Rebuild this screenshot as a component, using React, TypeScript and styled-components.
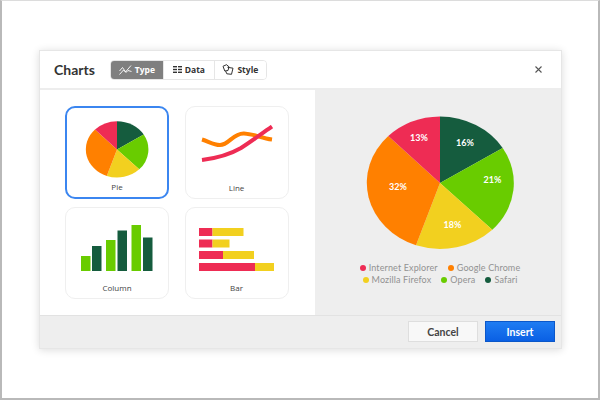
import styled, { createGlobalStyle } from "styled-components";
import React from "react";

const Global = createGlobalStyle`
  html, body {
    margin: 0;
    padding: 0;
    background: #fff;
  }
  * {
    box-sizing: border-box;
  }
`;

const Page = styled.div`
  width: 600px;
  height: 400px;
  padding: 49px 36px 49px 37px;
  border-style: solid;
  border-color: #b9b9b9;
  border-width: 1px 2px 2px 2px;
  border-top-color: #dcdcdc;
  font-family: "Open Sans", sans-serif;
`;

const Dialog = styled.div`
  width: 523px;
  height: 299px;
  background: #fff;
  display: flex;
  flex-direction: column;
  border: 1px solid #e6e6e6;
  box-shadow: 0 1px 8px rgba(0, 0, 0, 0.14);
`;

const Header = styled.div`
  height: 39px;
  flex: none;
  display: flex;
  align-items: center;
  padding: 0 19px 0 14px;
  border-bottom: 2px solid #ededed;
`;

const Title = styled.h1`
  margin: 0 15px 0 0;
  font-family: "Lato", sans-serif;
  font-size: 14px;
  font-weight: 700;
  color: #333;
`;

const Tabs = styled.div`
  display: flex;
  height: 20px;
  border: 1px solid #e6e6e6;
  border-radius: 4px;
  overflow: hidden;
`;

const Tab = styled.div<{ $active?: boolean; $width: number }>`
  width: ${({ $width }) => $width}px;
  display: flex;
  align-items: center;
  justify-content: center;
  gap: 3px;
  font-size: 8.5px;
  font-weight: 700;
  background: ${({ $active }) => ($active ? "#7f7f7f" : "#fff")};
  color: ${({ $active }) => ($active ? "#fff" : "#333")};
  & + & {
    border-left: 1px solid #e6e6e6;
  }
`;

const Close = styled.div`
  margin-left: auto;
  color: #444;
  display: flex;
`;

const Body = styled.div`
  flex: 1;
  display: flex;
  min-height: 0;
`;

const Gallery = styled.div`
  width: 275px;
  flex: none;
  padding: 16px 0 0 25px;
  display: grid;
  grid-template-columns: 104px 104px;
  grid-template-rows: 92.5px 92px;
  column-gap: 15.5px;
  row-gap: 8.5px;
  align-content: start;
`;

const Card = styled.div<{ $selected?: boolean }>`
  border-radius: 10px;
  border: ${({ $selected }) =>
    $selected ? "2px solid #3b86f0" : "1.5px solid #efefef"};
  display: flex;
  flex-direction: column;
  align-items: center;
  justify-content: flex-end;
  padding-bottom: 5px;
  background: #fff;
`;

const Thumb = styled.svg`
  display: block;
  flex: none;
`;

const CardLabel = styled.div<{ $gap: number }>`
  font-size: 8px;
  line-height: 11px;
  color: #444;
  margin-top: ${({ $gap }) => $gap}px;
`;

const Preview = styled.div`
  flex: 1;
  background: #eeeeee;
  display: flex;
  flex-direction: column;
  align-items: center;
  padding: 26px 0 0 4px;
`;

const Legend = styled.div`
  margin-top: 13px;
  display: flex;
  flex-direction: column;
  align-items: center;
  gap: 2px;
`;

const LegendRow = styled.div`
  display: flex;
  gap: 10px;
`;

const LegendItem = styled.div`
  display: flex;
  align-items: center;
  gap: 3px;
  font-family: "Lato", sans-serif;
  font-size: 9px;
  letter-spacing: 0.12px;
  line-height: 10px;
  color: #929292;
`;

const Dot = styled.span<{ $color: string }>`
  width: 6px;
  height: 6px;
  border-radius: 50%;
  background: ${({ $color }) => $color};
`;

const Footer = styled.div`
  height: 33px;
  flex: none;
  background: #eeeeee;
  border-top: 1px solid #e2e2e2;
  display: flex;
  justify-content: flex-end;
  align-items: center;
  gap: 7px;
  padding: 0 6px 1px 0;
`;

const Button = styled.div<{ $primary?: boolean }>`
  width: 70px;
  height: 21px;
  display: flex;
  align-items: center;
  justify-content: center;
  font-family: "Lato", sans-serif;
  font-size: 10.5px;
  font-weight: 700;
  color: ${({ $primary }) => ($primary ? "#fff" : "#444")};
  background: ${({ $primary }) =>
    $primary ? "linear-gradient(#1f7cf2, #0a60e4)" : "#f8f8f8"};
  border: 1px solid ${({ $primary }) => ($primary ? "#0b57c9" : "#dedede")};
`;

const COLORS = {
  red: "#ee2c54",
  orange: "#ff8000",
  yellow: "#f2d01f",
  green: "#69cc00",
  dark: "#155c3e",
};

const rx = 74.5;
const ry = 66.5;
const slices = [
  { color: COLORS.dark, from: [0, -66.5], to: [62.7, -35] },
  { color: COLORS.green, from: [62.7, -35], to: [52.3, 46.7] },
  { color: COLORS.yellow, from: [52.3, 46.7], to: [-24, 62.3] },
  { color: COLORS.orange, from: [-24, 62.3], to: [-51.7, -47] },
  { color: COLORS.red, from: [-51.7, -47], to: [0, -66.5] },
];

const labels = [
  { text: "16%", x: 25, y: -39 },
  { text: "21%", x: 52.5, y: -2 },
  { text: "18%", x: 12.5, y: 43 },
  { text: "32%", x: -42, y: 5 },
  { text: "13%", x: -21, y: -44 },
];

const Pie: React.FC<{ width: number; height: number; showLabels?: boolean }> = ({
  width,
  height,
  showLabels,
}) => (
  <Thumb width={width} height={height} viewBox="-75 -67 150 134">
    {slices.map((s) => (
      <path
        key={s.color}
        fill={s.color}
        d={`M0 0L${s.from[0]} ${s.from[1]}A${rx} ${ry} 0 0 1 ${s.to[0]} ${s.to[1]}Z`}
      />
    ))}
    {showLabels &&
      labels.map((l) => (
        <text
          key={l.text}
          x={l.x}
          y={l.y}
          fill="#fff"
          fontSize="9"
          fontWeight="700"
          fontFamily="Lato, sans-serif"
          textAnchor="middle"
          dominantBaseline="middle"
        >
          {l.text}
        </text>
      ))}
  </Thumb>
);

const LineThumb = () => (
  <Thumb width={72} height={42} viewBox="0 0 72 42" fill="none">
    <path
      d="M1 14.5C8 16.5 12 20 19 20C28 20 32 8 43 8.5C53 9 60 13 71 14.5"
      stroke={COLORS.orange}
      strokeWidth="4"
    />
    <path
      d="M1 35C17 33 28 30 40 23C51 16 60 9 71 1.5"
      stroke={COLORS.red}
      strokeWidth="4"
    />
  </Thumb>
);

const ColumnThumb = () => {
  const bars = [
    { x: 0, h: 15, c: COLORS.green },
    { x: 11, h: 25, c: COLORS.dark },
    { x: 25, h: 31, c: COLORS.green },
    { x: 36.5, h: 40.5, c: COLORS.dark },
    { x: 50.5, h: 46, c: COLORS.green },
    { x: 62, h: 33.5, c: COLORS.dark },
  ];
  return (
    <Thumb width={72} height={46} viewBox="0 0 72 46">
      {bars.map((b) => (
        <rect key={b.x} x={b.x} y={46 - b.h} width={9.5} height={b.h} fill={b.c} />
      ))}
    </Thumb>
  );
};

const BarThumb = () => {
  const rows = [
    { y: 0, r: 13.5, e: 44.5 },
    { y: 11.5, r: 13.5, e: 30.5 },
    { y: 23, r: 24, e: 55 },
    { y: 35, r: 56, e: 75 },
  ];
  return (
    <Thumb width={75} height={43} viewBox="0 0 75 43">
      {rows.map((b) => (
        <g key={b.y}>
          <rect x={0} y={b.y} width={b.r} height={8} fill={COLORS.red} />
          <rect x={b.r} y={b.y} width={b.e - b.r} height={8} fill={COLORS.yellow} />
        </g>
      ))}
    </Thumb>
  );
};

const TypeIcon = () => (
  <svg width="13" height="10" viewBox="0 0 13 10" fill="none" stroke="#fff" strokeWidth="0.9">
    <path d="M0.5 9.5L4.5 5L6.5 7L12 0.5" />
    <path d="M0.5 6L3.5 2.5L7 7.5L9 5.5L12.5 6.5" />
  </svg>
);

const DataIcon = () => (
  <svg width="9" height="7" viewBox="0 0 9 7" fill="#333">
    <rect x="0" y="0" width="4" height="1.4" />
    <rect x="0" y="2.8" width="4" height="1.4" />
    <rect x="0" y="5.6" width="4" height="1.4" />
    <rect x="5" y="0" width="4" height="1.4" />
    <rect x="5" y="2.8" width="4" height="1.4" />
    <rect x="5" y="5.6" width="4" height="1.4" />
  </svg>
);

const StyleIcon = () => (
  <svg width="12" height="11" viewBox="0 0 12 11" fill="none" stroke="#333" strokeWidth="1">
    <path d="M1 2.3L4.5 0.7L7 2.8L6 6.5L2.8 7L1 2.3Z" />
    <path d="M5.5 3.3L11 4.2L9.5 10.3L4.8 9.8L3.6 7" />
  </svg>
);

export default function App() {
  return (
    <Page>
      <Global />
      <Dialog>
        <Header>
          <Title>Charts</Title>
          <Tabs>
            <Tab $active $width={52}>
              <TypeIcon />
              Type
            </Tab>
            <Tab $width={51}>
              <DataIcon />
              Data
            </Tab>
            <Tab $width={52}>
              <StyleIcon />
              Style
            </Tab>
          </Tabs>
          <Close>
            <svg width="7" height="7" viewBox="0 0 7 7" stroke="#555" strokeWidth="1.1">
              <path d="M0.5 0.5L6.5 6.5M6.5 0.5L0.5 6.5" />
            </svg>
          </Close>
        </Header>
        <Body>
          <Gallery>
            <Card $selected>
              <Pie width={64} height={57} />
              <CardLabel $gap={3}>Pie</CardLabel>
            </Card>
            <Card>
              <LineThumb />
              <CardLabel $gap={15}>Line</CardLabel>
            </Card>
            <Card>
              <ColumnThumb />
              <CardLabel $gap={11}>Column</CardLabel>
            </Card>
            <Card>
              <BarThumb />
              <CardLabel $gap={11}>Bar</CardLabel>
            </Card>
          </Gallery>
          <Preview>
            <Pie width={150} height={134} showLabels />
            <Legend>
              <LegendRow>
                <LegendItem>
                  <Dot $color={COLORS.red} />
                  Internet Explorer
                </LegendItem>
                <LegendItem>
                  <Dot $color={COLORS.orange} />
                  Google Chrome
                </LegendItem>
              </LegendRow>
              <LegendRow>
                <LegendItem>
                  <Dot $color={COLORS.yellow} />
                  Mozilla Firefox
                </LegendItem>
                <LegendItem>
                  <Dot $color={COLORS.green} />
                  Opera
                </LegendItem>
                <LegendItem>
                  <Dot $color={COLORS.dark} />
                  Safari
                </LegendItem>
              </LegendRow>
            </Legend>
          </Preview>
        </Body>
        <Footer>
          <Button>Cancel</Button>
          <Button $primary>Insert</Button>
        </Footer>
      </Dialog>
    </Page>
  );
}
